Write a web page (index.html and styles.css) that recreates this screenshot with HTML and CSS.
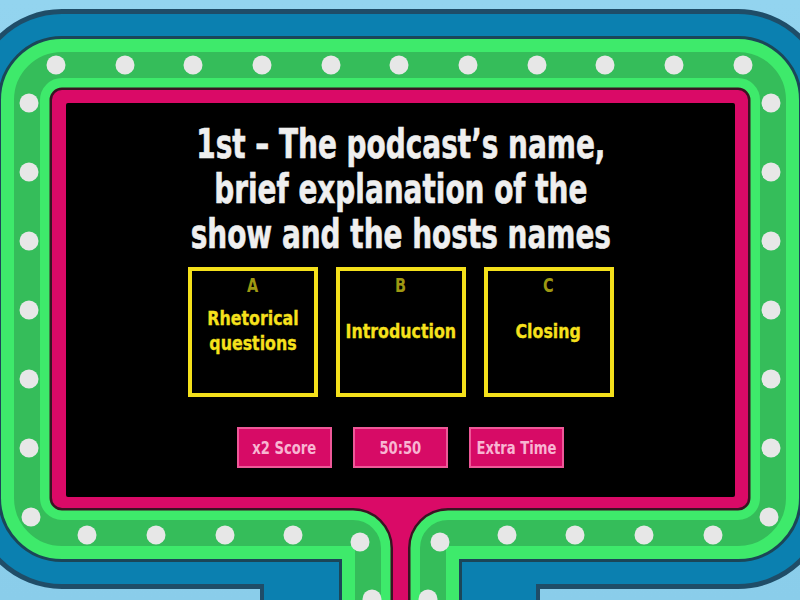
FILE: index.html
```html
<!DOCTYPE html>
<html lang="en">
<head>
<meta charset="utf-8">
<title>Gameshow quiz</title>
<link rel="stylesheet" href="styles.css">
</head>
<body>
<div class="stage">
  <svg class="frame" width="800" height="600" viewBox="0 0 800 600" aria-hidden="true">
    <defs>
      <path id="ring" d="M62 90 H738 A10 10 0 0 1 748 100 V498 A10 10 0 0 1 738 508 H448 A40 40 0 0 0 408 548 V660 H393 V548 A40 40 0 0 0 353 508 H62 A10 10 0 0 1 52 498 V100 A10 10 0 0 1 62 90 Z"/>
      <path id="box" d="M62 90 H738 A10 10 0 0 1 748 100 V498 A10 10 0 0 1 738 508 H62 A10 10 0 0 1 52 498 V100 A10 10 0 0 1 62 90 Z"/>
    </defs>
    <use href="#box" fill="#1f4d68" stroke="#1f4d68" stroke-width="162" stroke-linejoin="round"/>
    <rect x="260" y="540" width="280" height="70" fill="#1f4d68"/>
    <use href="#box" fill="#0b80b0" stroke="#0b80b0" stroke-width="152" stroke-linejoin="round"/>
    <rect x="264" y="540" width="272" height="70" fill="#0b80b0"/>
    <use href="#ring" fill="#1b4658" stroke="#1b4658" stroke-width="108" stroke-linejoin="round"/>
    <use href="#ring" fill="#3eea6b" stroke="#3eea6b" stroke-width="102" stroke-linejoin="round"/>
    <use href="#ring" fill="#35bd5a" stroke="#35bd5a" stroke-width="76" stroke-linejoin="round"/>
    <use href="#ring" fill="#3eea6b" stroke="#3eea6b" stroke-width="24" stroke-linejoin="round"/>
    <use href="#ring" fill="#3a1422" stroke="#3a1422" stroke-width="5" stroke-linejoin="round"/>
    <use href="#ring" fill="#da0a67"/>
    <rect x="66" y="103" width="669" height="394" rx="2" fill="#000"/>
    <g fill="#e7e7e7">
      <circle cx="56" cy="65" r="9.5"/><circle cx="125" cy="65" r="9.5"/><circle cx="193" cy="65" r="9.5"/>
      <circle cx="262" cy="65" r="9.5"/><circle cx="331" cy="65" r="9.5"/><circle cx="399" cy="65" r="9.5"/>
      <circle cx="468" cy="65" r="9.5"/><circle cx="537" cy="65" r="9.5"/><circle cx="605" cy="65" r="9.5"/>
      <circle cx="674" cy="65" r="9.5"/><circle cx="743" cy="65" r="9.5"/>
      <circle cx="29" cy="103" r="9.5"/><circle cx="29" cy="172" r="9.5"/><circle cx="29" cy="241" r="9.5"/>
      <circle cx="29" cy="310" r="9.5"/><circle cx="29" cy="379" r="9.5"/><circle cx="29" cy="448" r="9.5"/>
      <circle cx="31" cy="517" r="9.5"/>
      <circle cx="771" cy="103" r="9.5"/><circle cx="771" cy="172" r="9.5"/><circle cx="771" cy="241" r="9.5"/>
      <circle cx="771" cy="310" r="9.5"/><circle cx="771" cy="379" r="9.5"/><circle cx="771" cy="448" r="9.5"/>
      <circle cx="769" cy="517" r="9.5"/>
      <circle cx="87" cy="535" r="9.5"/><circle cx="156" cy="535" r="9.5"/><circle cx="225" cy="535" r="9.5"/>
      <circle cx="293" cy="535" r="9.5"/><circle cx="360" cy="542" r="9.5"/><circle cx="372" cy="599" r="9.5"/>
      <circle cx="713" cy="535" r="9.5"/><circle cx="644" cy="535" r="9.5"/><circle cx="575" cy="535" r="9.5"/>
      <circle cx="507" cy="535" r="9.5"/><circle cx="440" cy="542" r="9.5"/><circle cx="428" cy="599" r="9.5"/>
    </g>
  </svg>

  <main class="screen">
    <h1 class="question">1st – The podcast’s name,<br>brief explanation of the<br>show and the hosts names</h1>
    <div class="answers">
      <div class="answer">
        <span class="letter">A</span>
        <span class="answer-text"><span class="squeeze">Rhetorical questions</span></span>
      </div>
      <div class="answer">
        <span class="letter">B</span>
        <span class="answer-text"><span class="squeeze">Introduction</span></span>
      </div>
      <div class="answer">
        <span class="letter">C</span>
        <span class="answer-text"><span class="squeeze">Closing</span></span>
      </div>
    </div>
    <div class="powerups">
      <button class="powerup" type="button"><span class="powerup-label">x2 Score</span></button>
      <button class="powerup" type="button"><span class="powerup-label">50:50</span></button>
      <button class="powerup" type="button"><span class="powerup-label">Extra Time</span></button>
    </div>
  </main>
</div>
</body>
</html>
```

FILE: styles.css
```css
html, body {
  margin: 0;
  padding: 0;
}

body {
  background: #8dd0ec;
  font-family: "DejaVu Sans Condensed", "DejaVu Sans", "Liberation Sans", sans-serif;
  font-weight: bold;
}

.stage {
  position: relative;
  width: 800px;
  height: 600px;
  overflow: hidden;
  box-sizing: border-box;
  padding: 103px 0 0 66px;
  background: linear-gradient(180deg, #93d4ef 0%, #8acdea 100%);
}

.frame {
  position: absolute;
  left: 0;
  top: 0;
  z-index: 0;
}

.screen {
  position: relative;
  z-index: 1;
  width: 669px;
  height: 394px;
  display: flex;
  flex-direction: column;
  align-items: center;
}

.question {
  margin: 19px 0 0;
  font-size: 40px;
  line-height: 45px;
  font-weight: bold;
  color: #efefef;
  -webkit-text-stroke: 0.6px #efefef;
  text-align: center;
  white-space: nowrap;
  transform: scaleX(0.776);
}

.answers {
  display: flex;
  gap: 18px;
  margin-top: 10px;
}

.answer {
  width: 130px;
  height: 130px;
  box-sizing: border-box;
  border: 4px solid #f4e01b;
  background: #000;
  display: flex;
  flex-direction: column;
  align-items: center;
  padding-top: 4px;
}

.letter {
  font-size: 19px;
  line-height: 20px;
  color: #9e9812;
  transform: scaleX(0.85);
}

.answer-text {
  height: 72px;
  width: 100%;
  display: flex;
  align-items: center;
  justify-content: center;
  text-align: center;
  font-size: 20px;
  line-height: 25px;
  color: #f6e11c;
  -webkit-text-stroke: 0.3px #f6e11c;
}

.squeeze {
  display: inline-block;
  transform: scaleX(0.88);
}

.powerups {
  display: flex;
  gap: 21px;
  margin-top: 30px;
}

.powerup {
  width: 95px;
  height: 41px;
  box-sizing: border-box;
  border: 2px solid #ee5898;
  background: #d70b66;
  color: #f8b5d2;
  font-family: inherit;
  font-weight: bold;
  font-size: 17px;
  padding: 0;
  white-space: nowrap;
  display: flex;
  align-items: center;
  justify-content: center;
}

.powerup-label {
  display: inline-block;
  transform: scaleX(0.86);
}
```
